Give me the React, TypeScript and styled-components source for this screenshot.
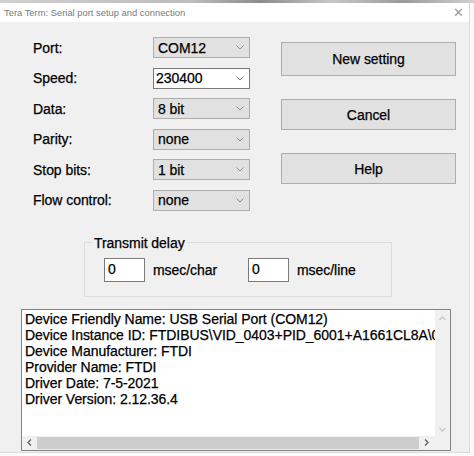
import styled, { createGlobalStyle } from 'styled-components';

const Global = createGlobalStyle`
    html, body {
        margin: 0;
        padding: 0;
        background: #ffffff;
    }
    body {
        font-family: 'Liberation Sans', Arial, sans-serif;
        color: #000;
    }
`
const Backdrop = styled.div`
    width: 474px;
    height: 456px;
    overflow: hidden;
    background: #fbfbfb;
`
const TopStrip = styled.div`
    height: 3px;
    background: linear-gradient(90deg, #cfcfcf 0%, #bdbdbd 40%, #8c8c8c 55%, #c8c8c8 70%, #9a9a9a 85%, #d0d0d0 100%);
`
const Window = styled.div`
    width: 469px;
    height: 449px;
    background: #f0f0f0;
    border-right: 1px solid #dadada;
    border-bottom: 1px solid #dadada;
    display: flex;
    flex-direction: column;
`
const TitleBar = styled.div`
    height: 19px;
    background: #ffffff;
    display: flex;
    align-items: center;
    justify-content: space-between;
    padding: 0 5px 0 4px;
    font-family: 'Liberation Sans', Arial, sans-serif;
    font-size: 9.4px;
    color: #7a7a7a;
`
const Close = styled.span`
    font-size: 13px;
    color: #9a9a9a;
    font-weight: 300;
    line-height: 1;
`
const Body = styled.div`
    flex: 1;
    display: flex;
    flex-direction: column;
    padding: 15px 18px 0 21px;
    font-size: 14px;
    letter-spacing: -0.05px;
    -webkit-text-stroke: 0.25px #000;
`
const Top = styled.div`
    display: flex;
    gap: 31px;
`
const Form = styled.div`
    display: grid;
    grid-template-columns: 120px 97px;
    grid-auto-rows: 21px;
    row-gap: 9.6px;
    padding-left: 12px;
`
const Label = styled.div`
    display: flex;
    align-items: center;
`
const Combo = styled.div<{ editable?: boolean }>`
    box-sizing: border-box;
    height: 21px;
    display: flex;
    align-items: center;
    justify-content: space-between;
    padding: 0 5px 0 ${p => p.editable ? '2px' : '4px'};
    background: ${p => p.editable ? '#ffffff' : '#e1e1e1'};
    border: 1px solid ${p => p.editable ? '#7a7a7a' : '#adadad'};
`
const Chevron = () => (
    <svg width="8" height="5" viewBox="0 0 8 5">
        <path d="M0.5 0.5 L4 4 L7.5 0.5" fill="none" stroke="#8a8a8a" strokeWidth="1" />
    </svg>
)
const Buttons = styled.div`
    display: flex;
    flex-direction: column;
    gap: 23px;
    padding-top: 5px;
`
const Button = styled.div<{ h: number }>`
    box-sizing: border-box;
    width: 175px;
    height: ${p => p.h}px;
    display: flex;
    align-items: center;
    justify-content: center;
    background: #e1e1e1;
    border: 1px solid #adadad;
`
const Group = styled.fieldset`
    box-sizing: border-box;
    width: 308px;
    height: 62px;
    margin: 24px 0 0 63px;
    padding: 7px 0 0 19px;
    border: 1px solid #dcdcdc;
    display: flex;
    align-items: flex-start;
    gap: 8px;
`
const Legend = styled.legend`
    padding: 0 2px;
    margin-left: -12px;
    font-size: 14px;
`
const Field = styled.div`
    box-sizing: border-box;
    width: 41px;
    height: 24px;
    background: #ffffff;
    border: 1px solid #7a7a7a;
    padding: 2px 0 0 3px;
`
const Unit = styled.span<{ w: number }>`
    width: ${p => p.w}px;
    line-height: 24px;
`
const Info = styled.div`
    box-sizing: border-box;
    width: 430px;
    height: 142px;
    margin-top: 12px;
    background: #ffffff;
    border: 1px solid #828282;
    display: grid;
    grid-template-columns: 1fr 15px;
    grid-template-rows: 1fr 14px;
`
const InfoText = styled.div`
    padding: 1px 0 0 3px;
    line-height: 16px;
    white-space: nowrap;
    overflow: hidden;
`
const VScroll = styled.div`
    background: #f0f0f0;
    display: flex;
    flex-direction: column;
    justify-content: space-between;
    align-items: center;
    padding: 6px 0 4px;
`
const HScroll = styled.div`
    background: #f0f0f0;
    display: flex;
    align-items: center;
    gap: 5px;
    padding: 0 6px 0 5px;
`
const Thumb = styled.div`
    flex: 1;
    height: 12px;
    background: #cdcdcd;
`
const Corner = styled.div`
    background: #f0f0f0;
`
const Arrow = ({ dir, color = '#a0a0a0' }: { dir: 'up' | 'down' | 'left' | 'right', color?: string }) => {
    const d = {
        up: 'M0.5 4 L3.5 1 L6.5 4',
        down: 'M0.5 1 L3.5 4 L6.5 1',
        left: 'M4 0.5 L1 3.5 L4 6.5',
        right: 'M1 0.5 L4 3.5 L1 6.5',
    }[dir];
    const horiz = dir === 'left' || dir === 'right';
    return (
        <svg width={horiz ? 5 : 7} height={horiz ? 7 : 5} viewBox={horiz ? '0 0 5 7' : '0 0 7 5'}>
            <path d={d} fill="none" stroke={color} strokeWidth="1.3" />
        </svg>
    )
}

const rows = [
    { label: 'Port:', value: 'COM12' },
    { label: 'Speed:', value: '230400', editable: true },
    { label: 'Data:', value: '8 bit' },
    { label: 'Parity:', value: 'none' },
    { label: 'Stop bits:', value: '1 bit' },
    { label: 'Flow control:', value: 'none' },
]

const info = [
    'Device Friendly Name: USB Serial Port (COM12)',
    'Device Instance ID: FTDIBUS\\VID_0403+PID_6001+A1661CL8A\\00',
    'Device Manufacturer: FTDI',
    'Provider Name: FTDI',
    'Driver Date: 7-5-2021',
    'Driver Version: 2.12.36.4',
]

function App() {
    return (
        <Backdrop>
            <Global />
            <TopStrip />
            <Window>
                <TitleBar>
                    <span>Tera Term: Serial port setup and connection</span>
                    <Close>✕</Close>
                </TitleBar>
                <Body>
                    <Top>
                        <Form>
                            {
                                rows.map(row => (
                                    <>
                                        <Label key={row.label}>{row.label}</Label>
                                        <Combo key={row.label + 'v'} editable={row.editable}>
                                            <span>{row.value}</span>
                                            <Chevron />
                                        </Combo>
                                    </>
                                ))
                            }
                        </Form>
                        <Buttons>
                            <Button h={34}>New setting</Button>
                            <Button h={31}>Cancel</Button>
                            <Button h={31}>Help</Button>
                        </Buttons>
                    </Top>
                    <Group>
                        <Legend>Transmit delay</Legend>
                        <Field>0</Field>
                        <Unit w={87}>msec/char</Unit>
                        <Field>0</Field>
                        <Unit w={80}>msec/line</Unit>
                    </Group>
                    <Info>
                        <InfoText>
                            {info.map(line => <div key={line}>{line}</div>)}
                        </InfoText>
                        <VScroll>
                            <Arrow dir="up" color="#c8c8c8" />
                            <Arrow dir="down" color="#c8c8c8" />
                        </VScroll>
                        <HScroll>
                            <Arrow dir="left" color="#606060" />
                            <Thumb />
                            <Arrow dir="right" color="#606060" />
                        </HScroll>
                        <Corner />
                    </Info>
                </Body>
            </Window>
        </Backdrop>
    )
}

export default App;
